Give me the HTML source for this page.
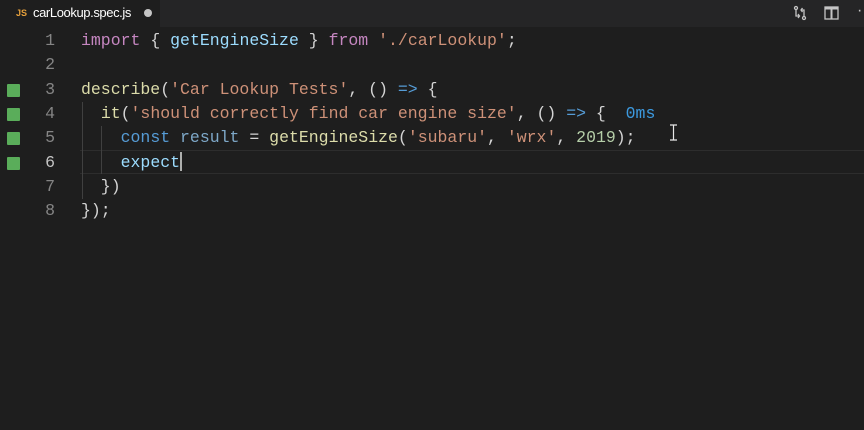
<!DOCTYPE html>
<html><head><meta charset="utf-8"><style>
html,body{margin:0;padding:0;width:864px;height:430px;background:#1e1e1e;overflow:hidden}
.tabbar{position:absolute;left:0;top:0;width:864px;height:27px;background:#252526}
.tab{position:absolute;left:0;top:0;width:160px;height:27px;background:#1e1e1e;font-family:"Liberation Sans",sans-serif;font-size:13px;color:#fff}
.tab .js{position:absolute;left:16px;top:8px;font-size:9px;font-weight:bold;color:#e8a23c}
.tab .nm{position:absolute;left:33px;top:5px;letter-spacing:-0.4px}
.tab .dot{position:absolute;left:144px;top:9px;width:8px;height:8px;border-radius:50%;background:#c5c5c5}
.code{position:absolute;left:0;top:29px;width:864px;font-family:"Liberation Mono",monospace;font-size:16.5px}
.ln{position:absolute;height:24.3px;line-height:24.3px;white-space:pre}
.num{position:absolute;width:55px;text-align:right;left:0;color:#858585}
.txt{position:absolute;left:81px;color:#d4d4d4}
.gm{position:absolute;left:7px;width:13px;height:13px;background:#5aad5a;border-radius:1px}
.k{color:#c586c0}.v{color:#9cdcfe}.f{color:#dcdcaa}.s{color:#ce9178}.b{color:#569cd6}.n{color:#b5cea8}.r{color:#7ea8c8}
.guide{position:absolute;width:1px;background:#404040}
</style></head><body>
<div class="tabbar">
<div class="tab"><span class="js">JS</span><span class="nm">carLookup.spec.js</span><span class="dot"></span></div>
<svg style="position:absolute;left:792px;top:5px" width="16" height="16" viewBox="0 0 16 16" fill="none" stroke="#c5c5c5" stroke-width="1.3"><circle cx="4" cy="3" r="1.5"/><circle cx="12" cy="13" r="1.5"/><path d="M4 4.5v6.5h3M6 9l1.5 2L6 13"/><path d="M12 11.5V5H9M10.5 3L9 5l1.5 2"/></svg>
<svg style="position:absolute;left:824px;top:6px" width="15" height="14" viewBox="0 0 15 14" fill="none" stroke="#c5c5c5" stroke-width="1.3"><rect x="1" y="1" width="13" height="12"/><path d="M7.5 1v12M1 2.5h13" stroke-width="2"/></svg>
<span style="position:absolute;left:857px;top:2px;color:#c5c5c5;font:16px 'Liberation Sans',sans-serif">·</span>
</div>
<div style="position:absolute;left:80px;top:150px;width:784px;height:22px;border-top:1px solid #2d2d2d;border-bottom:1px solid #2d2d2d"></div>
<div class="guide" style="left:82px;top:102px;height:97px"></div>
<div class="guide" style="left:101px;top:126px;height:48px"></div>
<div class="code">
<div class="ln" style="top:0"><span class="num">1</span><span class="txt"><span class="k">import</span> { <span class="v">getEngineSize</span> } <span class="k">from</span> <span class="s">'./carLookup'</span>;</span></div>
<div class="ln" style="top:24.3px"><span class="num">2</span></div>
<div class="ln" style="top:48.6px"><div class="gm" style="top:6px"></div><span class="num">3</span><span class="txt"><span class="f">describe</span>(<span class="s">'Car Lookup Tests'</span>, () <span class="b">=&gt;</span> {</span></div>
<div class="ln" style="top:72.9px"><div class="gm" style="top:6px"></div><span class="num">4</span><span class="txt">  <span class="f">it</span>(<span class="s">'should correctly find car engine size'</span>, () <span class="b">=&gt;</span> {  <span style="color:#3c9ae0">0ms</span></span></div>
<div class="ln" style="top:97.2px"><div class="gm" style="top:6px"></div><span class="num">5</span><span class="txt">    <span class="b">const</span> <span class="r">result</span> = <span class="f">getEngineSize</span>(<span class="s">'subaru'</span>, <span class="s">'wrx'</span>, <span class="n">2019</span>);</span></div>
<div class="ln" style="top:121.5px"><div class="gm" style="top:6px"></div><span class="num" style="color:#c6c6c6">6</span><span class="txt">    <span class="v">expect</span><span style="display:inline-block;width:2px;height:19px;background:#aeafad;vertical-align:-4px"></span></span></div>
<div class="ln" style="top:145.8px"><span class="num">7</span><span class="txt">  })</span></div>
<div class="ln" style="top:170.1px"><span class="num">8</span><span class="txt">});</span></div>
</div>
<svg style="position:absolute;left:669px;top:124px" width="9" height="17" viewBox="0 0 9 17" fill="none" stroke="#e8e8e8" stroke-width="1.2"><path d="M1 1h7M4.5 1v15M1 16h7"/></svg>
</body></html>
